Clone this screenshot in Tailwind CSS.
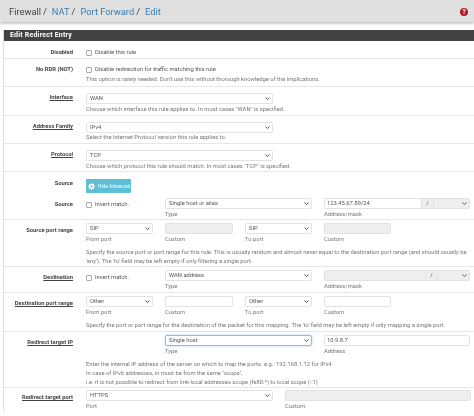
<!DOCTYPE html>
<html lang="en">
<head>
  <title>Edit Redirect Entry</title>
  <script src="https://cdn.jsdelivr.net/npm/@tailwindcss/browser@4"></script>
</head>
<body class="w-[474px] h-[416px] overflow-hidden bg-white">
<div class="blur-[0.3px] text-[#555] font-['Roboto',sans-serif] text-[5.8px] leading-[9px]">

  <div class="flex items-center justify-between h-[22px] pl-[9px] pr-[6px] bg-[#e0e0e0] shadow-[0_1px_3px_rgba(0,0,0,0.35)] text-[9.3px]">
    <div class="flex gap-[2px]">
      <span class="text-[#444]">Firewall</span><span class="mr-[3px] text-[#444]">/</span>
      <span class="text-[#3f7cac]">NAT</span><span class="mr-[3px] text-[#444]">/</span>
      <span class="text-[#3f7cac]">Port Forward</span><span class="mr-[3px] text-[#444]">/</span>
      <span class="text-[#3f7cac]">Edit</span>
    </div>
    <span class="flex items-center justify-center mt-[2px] w-[8px] h-[8px] rounded-full bg-[#b01c24] text-white text-[6.5px] font-bold leading-none">?</span>
  </div>

  <div class="mt-[8px] ml-[3px] border-l border-[#ddd]">
    <div class="flex items-center h-[11px] pl-[6px] bg-[#424242] text-white text-[7px] font-bold tracking-[0.2px]">Edit Redirect Entry</div>

    <div class="flex h-[18px] border-b border-[#e6e6e6] pt-[7px]">
      <div class="w-[69px] text-right font-bold text-[#444]">Disabled</div>
      <label class="ml-[13px] flex items-start gap-[3px]"><span class="mt-[2px] w-[6px] h-[6px] border border-[#aaa] rounded-[1px]"></span>Disable this rule</label>
    </div>

    <div class="flex h-[28px] border-b border-[#e6e6e6] pt-[6px]">
      <div class="w-[69px] text-right font-bold text-[#444]">No RDR (NOT)</div>
      <div class="ml-[13px]">
        <label class="flex items-start gap-[3px]"><span class="mt-[2px] w-[6px] h-[6px] border border-[#aaa] rounded-[1px]"></span>Disable redirection for traffic matching this rule</label>
        <p class="mt-[1px] text-[#777]">This option is rarely needed. Don't use this without thorough knowledge of the implications.</p>
      </div>
    </div>

    <div class="flex h-[29px] border-b border-[#e6e6e6] pt-[6px]">
      <div class="w-[69px] text-right font-bold text-[#444] underline">Interface</div>
      <div class="ml-[13px]">
        <div class="flex items-center justify-between w-[187px] h-[11px] pl-[3px] pr-[2px] border border-[#e2e2e2] rounded-[2px]"><span>WAN</span><svg class="w-[5px] h-[3px]" viewBox="0 0 10 6"><path d="M1 1l4 4 4-4" fill="none" stroke="#555" stroke-width="2"/></svg></div>
        <p class="mt-[1px] text-[#777]">Choose which interface this rule applies to. In most cases "WAN" is specified.</p>
      </div>
    </div>

    <div class="flex h-[28px] border-b border-[#e6e6e6] pt-[6px]">
      <div class="w-[69px] text-right font-bold text-[#444] underline">Address Family</div>
      <div class="ml-[13px]">
        <div class="flex items-center justify-between w-[187px] h-[11px] pl-[3px] pr-[2px] border border-[#e2e2e2] rounded-[2px]"><span>IPv4</span><svg class="w-[5px] h-[3px]" viewBox="0 0 10 6"><path d="M1 1l4 4 4-4" fill="none" stroke="#555" stroke-width="2"/></svg></div>
        <p class="text-[#777]">Select the Internet Protocol version this rule applies to.</p>
      </div>
    </div>

    <div class="flex h-[28px] border-b border-[#e6e6e6] pt-[6px]">
      <div class="w-[69px] text-right font-bold text-[#444] underline">Protocol</div>
      <div class="ml-[13px]">
        <div class="flex items-center justify-between w-[187px] h-[11px] pl-[3px] pr-[2px] border border-[#e2e2e2] rounded-[2px]"><span>TCP</span><svg class="w-[5px] h-[3px]" viewBox="0 0 10 6"><path d="M1 1l4 4 4-4" fill="none" stroke="#555" stroke-width="2"/></svg></div>
        <p class="mt-[1px] text-[#777]">Choose which protocol this rule should match. In most cases "TCP" is specified.</p>
      </div>
    </div>

    <div class="flex h-[23px] pt-[7px]">
      <div class="w-[69px] text-right font-bold text-[#444]">Source</div>
      <div class="ml-[13px] flex items-center gap-[3px] h-[14px] w-[45px] pl-[2px] rounded-[1px] bg-[#5bbfd6] text-white text-[4.8px] whitespace-nowrap">
        <svg class="w-[7px] h-[7px] shrink-0" viewBox="0 0 16 16"><path fill="#fff" d="M7 0h2l.4 2.200 1.500.6L12.800 1.500l1.700 1.700-1.300 1.900.6 1.500L16 7v2l-2.200.4-.6 1.500 1.300 1.900-1.700 1.700-1.900-1.300-1.500.6L9 16H7l-.4-2.200-1.500-.6-1.900 1.300-1.700-1.700 1.300-1.900-.6-1.500L0 9V7l2.200-.4.6-1.500-1.300-1.900 1.700-1.700 1.900 1.300 1.500-.6z"/><circle cx="8" cy="8" r="2.500" fill="#5bbfd6"/></svg>
        Hide Advanced
      </div>
    </div>

    <div class="flex h-[25px] border-b border-[#e6e6e6]">
      <div class="w-[69px] pt-[5px] text-right font-bold text-[#444]">Source</div>
      <div class="ml-[13px] flex w-[385px] gap-[12px] pt-[3px]">
        <label class="w-[67px] pt-[2px] flex items-start gap-[3px]"><span class="mt-[2px] w-[6px] h-[6px] border border-[#aaa] rounded-[1px]"></span>Invert match.</label>
        <div class="w-[147px]">
          <div class="flex items-center justify-between h-[11px] pl-[3px] pr-[2px] border border-[#e2e2e2] rounded-[2px]"><span>Single host or alias</span><svg class="w-[5px] h-[3px]" viewBox="0 0 10 6"><path d="M1 1l4 4 4-4" fill="none" stroke="#555" stroke-width="2"/></svg></div>
          <p class="mt-[1px] text-[#777]">Type</p>
        </div>
        <div class="w-[146px]">
          <div class="flex h-[11px] border border-[#e2e2e2] rounded-[2px]">
            <span class="flex-1 px-[2px]">123.45.67.89/24</span>
            <span class="w-[13px] text-center bg-[#eee] border-x border-[#e2e2e2]">/</span>
            <span class="flex items-center justify-end w-[35px] pr-[2px] bg-[#eee]"><svg class="w-[5px] h-[3px]" viewBox="0 0 10 6"><path d="M1 1l4 4 4-4" fill="none" stroke="#555" stroke-width="2"/></svg></span>
          </div>
          <p class="mt-[1px] text-[#777]">Address/mask</p>
        </div>
      </div>
    </div>

    <div class="flex h-[47px] border-b border-[#e6e6e6] pt-[3px]">
      <div class="w-[69px] pt-[3px] text-right font-bold text-[#444]">Source port range</div>
      <div class="ml-[13px] w-[385px]">
        <div class="flex gap-[12px]">
          <div class="w-[67px]"><div class="flex items-center justify-between h-[11px] pl-[3px] pr-[2px] border border-[#e2e2e2] rounded-[2px]"><span>SIP</span><svg class="w-[5px] h-[3px]" viewBox="0 0 10 6"><path d="M1 1l4 4 4-4" fill="none" stroke="#555" stroke-width="2"/></svg></div><p class="mt-[1px] text-[#777]">From port</p></div>
          <div class="w-[68px]"><div class="h-[11px] bg-[#eee] border border-[#e2e2e2] rounded-[2px]"></div><p class="mt-[1px] text-[#777]">Custom</p></div>
          <div class="w-[67px]"><div class="flex items-center justify-between h-[11px] pl-[3px] pr-[2px] border border-[#e2e2e2] rounded-[2px]"><span>SIP</span><svg class="w-[5px] h-[3px]" viewBox="0 0 10 6"><path d="M1 1l4 4 4-4" fill="none" stroke="#555" stroke-width="2"/></svg></div><p class="mt-[1px] text-[#777]">To port</p></div>
          <div class="w-[67px]"><div class="h-[11px] bg-[#eee] border border-[#e2e2e2] rounded-[2px]"></div><p class="mt-[1px] text-[#777]">Custom</p></div>
        </div>
        <p class="mt-[4px] text-[#777]">Specify the source port or port range for this rule. This is usually random and almost never equal to the destination port range (and should usually be 'any'). The 'to' field may be left empty if only filtering a single port.</p>
      </div>
    </div>

    <div class="flex h-[26px] border-b border-[#e6e6e6]">
      <div class="w-[69px] pt-[6px] text-right font-bold text-[#444] underline">Destination</div>
      <div class="ml-[13px] flex w-[385px] gap-[12px] pt-[3px]">
        <label class="w-[67px] pt-[3px] flex items-start gap-[3px]"><span class="mt-[2px] w-[6px] h-[6px] border border-[#aaa] rounded-[1px]"></span>Invert match.</label>
        <div class="w-[147px]">
          <div class="flex items-center justify-between h-[11px] pl-[3px] pr-[2px] border border-[#e2e2e2] rounded-[2px]"><span>WAN address</span><svg class="w-[5px] h-[3px]" viewBox="0 0 10 6"><path d="M1 1l4 4 4-4" fill="none" stroke="#555" stroke-width="2"/></svg></div>
          <p class="mt-[1px] text-[#777]">Type</p>
        </div>
        <div class="w-[146px]">
          <div class="flex h-[11px] border border-[#e2e2e2] rounded-[2px] bg-[#eee]">
            <span class="flex-1"></span>
            <span class="w-[13px] text-center border-x border-[#e2e2e2]">/</span>
            <span class="flex items-center justify-end w-[31px] pr-[2px]"><svg class="w-[5px] h-[3px]" viewBox="0 0 10 6"><path d="M1 1l4 4 4-4" fill="none" stroke="#555" stroke-width="2"/></svg></span>
          </div>
          <p class="mt-[1px] text-[#777]">Address/mask</p>
        </div>
      </div>
    </div>

    <div class="flex h-[39px] border-b border-[#e6e6e6] pt-[3px]">
      <div class="w-[69px] pt-[3px] text-right font-bold text-[#444] underline">Destination port range</div>
      <div class="ml-[13px] w-[385px]">
        <div class="flex gap-[12px]">
          <div class="w-[67px]"><div class="flex items-center justify-between h-[11px] pl-[3px] pr-[2px] border border-[#e2e2e2] rounded-[2px]"><span>Other</span><svg class="w-[5px] h-[3px]" viewBox="0 0 10 6"><path d="M1 1l4 4 4-4" fill="none" stroke="#555" stroke-width="2"/></svg></div><p class="mt-[1px] text-[#777]">From port</p></div>
          <div class="w-[68px]"><div class="h-[11px] border border-[#e2e2e2] rounded-[2px]"></div><p class="mt-[1px] text-[#777]">Custom</p></div>
          <div class="w-[67px]"><div class="flex items-center justify-between h-[11px] pl-[3px] pr-[2px] border border-[#e2e2e2] rounded-[2px]"><span>Other</span><svg class="w-[5px] h-[3px]" viewBox="0 0 10 6"><path d="M1 1l4 4 4-4" fill="none" stroke="#555" stroke-width="2"/></svg></div><p class="mt-[1px] text-[#777]">To port</p></div>
          <div class="w-[67px]"><div class="h-[11px] border border-[#e2e2e2] rounded-[2px]"></div><p class="mt-[1px] text-[#777]">Custom</p></div>
        </div>
        <p class="mt-[4px] text-[#777]">Specify the port or port range for the destination of the packet for this mapping. The 'to' field may be left empty if only mapping a single port.</p>
      </div>
    </div>

    <div class="flex h-[56px] border-b border-[#e6e6e6] pt-[3px]">
      <div class="w-[69px] pt-[3px] text-right font-bold text-[#444] underline">Redirect target IP</div>
      <div class="ml-[13px] w-[385px]">
        <div class="flex gap-[12px]">
          <div class="w-[67px]"></div>
          <div class="w-[147px]"><div class="flex items-center justify-between h-[11px] pl-[3px] pr-[2px] border border-[#8fbde0] rounded-[2px] shadow-[0_0_2px_rgba(102,175,233,0.7)]"><span>Single host</span><svg class="w-[5px] h-[3px]" viewBox="0 0 10 6"><path d="M1 1l4 4 4-4" fill="none" stroke="#555" stroke-width="2"/></svg></div><p class="mt-[1px] text-[#777]">Type</p></div>
          <div class="w-[146px]"><div class="h-[11px] px-[2px] border border-[#e2e2e2] rounded-[2px]">10.9.8.7</div><p class="mt-[1px] text-[#777]">Address</p></div>
        </div>
        <p class="mt-[4px] text-[#777]">Enter the internal IP address of the server on which to map the ports. e.g.: 192.168.1.12 for IPv4<br>In case of IPv6 addresses, in must be from the same "scope",<br>i.e. it is not possible to redirect from link-local addresses scope (fe80:*) to local scope (::1)</p>
      </div>
    </div>

    <div class="flex pt-[2px]">
      <div class="w-[69px] pt-[3px] text-right font-bold text-[#444] underline">Redirect target port</div>
      <div class="ml-[13px] flex w-[385px] gap-[12px]">
        <div class="w-[187px]"><div class="flex items-center justify-between h-[11px] pl-[3px] pr-[2px] border border-[#e2e2e2] rounded-[2px]"><span>HTTPS</span><svg class="w-[5px] h-[3px]" viewBox="0 0 10 6"><path d="M1 1l4 4 4-4" fill="none" stroke="#555" stroke-width="2"/></svg></div><p class="mt-[1px] text-[#777]">Port</p></div>
        <div class="w-[186px]"><div class="h-[11px] bg-[#eee] border border-[#e2e2e2] rounded-[2px]"></div><p class="mt-[1px] text-[#777]">Custom</p></div>
      </div>
    </div>
  </div>
</div>
</body>
</html>
